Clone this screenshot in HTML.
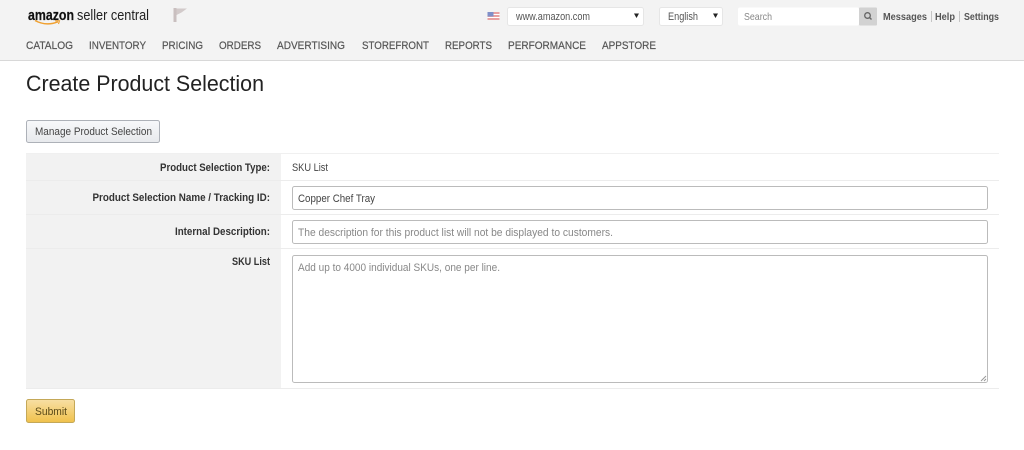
<!DOCTYPE html>
<html><head><meta charset="utf-8"><style>
html,body{margin:0;padding:0;background:#fff;width:1024px;height:450px;overflow:hidden}
svg{display:block;filter:blur(.3px)}
text{font-family:"Liberation Sans",sans-serif;font-size:11px;fill:#333;white-space:pre}
.nav{fill:#555;font-size:11px;stroke:#555;stroke-width:.2px}
.top{fill:#555;font-size:11px}
.lnk{fill:#555;font-size:10px;font-weight:bold}
.lab{fill:#333;font-size:11px;font-weight:bold}
.val{fill:#444;font-size:11px}
.ph{fill:#888;font-size:11px}
</style></head><body>
<svg width="1024" height="450" viewBox="0 0 1024 450" xmlns="http://www.w3.org/2000/svg">
<defs>
<linearGradient id="b" x1="0" y1="0" x2="0" y2="1"><stop offset="0" stop-color="#f7f8fa"/><stop offset="1" stop-color="#e7e9ec"/></linearGradient>
<linearGradient id="y" x1="0" y1="0" x2="0" y2="1"><stop offset="0" stop-color="#f7dfa5"/><stop offset="1" stop-color="#f0c14b"/></linearGradient>
</defs>
<rect width="1024" height="450" fill="#fff"/>
<rect width="1024" height="60" fill="#f3f3f3"/>
<rect y="60" width="1024" height="1" fill="#d8d8d8"/>

<text x="28" y="20" textLength="46" lengthAdjust="spacingAndGlyphs" style="font-size:15px;font-weight:bold;fill:#111;stroke:#111;stroke-width:.2px">amazon</text>
<text x="77" y="20" textLength="72" lengthAdjust="spacingAndGlyphs" style="font-size:15px;fill:#222">seller central</text>
<path d="M35 20.500Q46 26.500 58 21.800" fill="none" stroke="#f0a030" stroke-width="1.500"/>
<path d="M55 20.800L59.500 20.800L58.500 24" fill="none" stroke="#f0a030" stroke-width="1.100"/>
<rect x="173.500" y="8" width="3" height="14" fill="#c9bfbf"/>
<path d="M176.500 8.500H187L181.500 12.500L176.500 15Z" fill="#d2caca"/>

<rect x="487.500" y="12" width="12" height="8" fill="#e8a0a0"/>
<rect x="487.500" y="12" width="6" height="4.500" fill="#7f8fc8"/>
<rect x="493.500" y="14" width="6" height="1" fill="#fff"/><rect x="487.500" y="17" width="12" height="1" fill="#fff"/>

<rect x="507.500" y="7.500" width="136" height="18" rx="2" fill="#fff" stroke="#e6e6e6"/>
<text class="top" x="516" y="20" textLength="74" lengthAdjust="spacingAndGlyphs">www.amazon.com</text>
<path d="M634 13.500H639L636.500 18Z" fill="#222"/>
<rect x="659.500" y="7.500" width="63" height="18" rx="2" fill="#fff" stroke="#e6e6e6"/>
<text class="top" x="668" y="20" textLength="30" lengthAdjust="spacingAndGlyphs">English</text>
<path d="M713 13.500H718L715.500 18Z" fill="#222"/>
<rect x="738" y="7.500" width="121" height="18" rx="2" fill="#fff"/>
<text x="744" y="20" textLength="28" lengthAdjust="spacingAndGlyphs" style="font-size:10.5px;fill:#888">Search</text>
<rect x="859" y="7.500" width="18" height="18" rx="1" fill="#d2d2d2"/>
<circle cx="867.500" cy="15.500" r="2.800" fill="none" stroke="#666" stroke-width="1.300"/>
<path d="M869.500 17.500L871.500 19.500" stroke="#666" stroke-width="1.400"/>
<text class="lnk" x="883" y="20" textLength="44" lengthAdjust="spacingAndGlyphs">Messages</text>
<rect x="931" y="11" width="1" height="11" fill="#c4c4c4"/>
<text class="lnk" x="935" y="20" textLength="20" lengthAdjust="spacingAndGlyphs">Help</text>
<rect x="959" y="11" width="1" height="11" fill="#c4c4c4"/>
<text class="lnk" x="964" y="20" textLength="35" lengthAdjust="spacingAndGlyphs">Settings</text>

<text class="nav" x="26" y="49" textLength="47" lengthAdjust="spacingAndGlyphs">CATALOG</text>
<text class="nav" x="89" y="49" textLength="57" lengthAdjust="spacingAndGlyphs">INVENTORY</text>
<text class="nav" x="162" y="49" textLength="41" lengthAdjust="spacingAndGlyphs">PRICING</text>
<text class="nav" x="219" y="49" textLength="42" lengthAdjust="spacingAndGlyphs">ORDERS</text>
<text class="nav" x="277" y="49" textLength="68" lengthAdjust="spacingAndGlyphs">ADVERTISING</text>
<text class="nav" x="362" y="49" textLength="67" lengthAdjust="spacingAndGlyphs">STOREFRONT</text>
<text class="nav" x="445" y="49" textLength="47" lengthAdjust="spacingAndGlyphs">REPORTS</text>
<text class="nav" x="508" y="49" textLength="78" lengthAdjust="spacingAndGlyphs">PERFORMANCE</text>
<text class="nav" x="602" y="49" textLength="54" lengthAdjust="spacingAndGlyphs">APPSTORE</text>

<text x="26" y="91" textLength="238" lengthAdjust="spacingAndGlyphs" style="font-size:22px;fill:#222">Create Product Selection</text>

<rect x="26.500" y="120.500" width="133" height="22" rx="2" fill="url(#b)" stroke="#adb1b8"/>
<text x="35" y="135" textLength="117" lengthAdjust="spacingAndGlyphs" style="font-size:11px;fill:#444">Manage Product Selection</text>

<rect x="26" y="153" width="255" height="235" fill="#f2f2f2"/>
<rect x="26" y="153" width="973" height="1" fill="#f0f0f0"/>
<rect x="26" y="180" width="973" height="1" fill="#ececec"/>
<rect x="26" y="214" width="973" height="1" fill="#ececec"/>
<rect x="26" y="248" width="973" height="1" fill="#ececec"/>
<rect x="26" y="388" width="973" height="1" fill="#ececec"/>

<text class="lab" x="160" y="171" textLength="110" lengthAdjust="spacingAndGlyphs">Product Selection Type:</text>
<text class="lab" x="92.500" y="201" textLength="177.500" lengthAdjust="spacingAndGlyphs">Product Selection Name / Tracking ID:</text>
<text class="lab" x="175" y="235" textLength="95" lengthAdjust="spacingAndGlyphs">Internal Description:</text>
<text class="lab" x="232" y="265" textLength="38" lengthAdjust="spacingAndGlyphs">SKU List</text>

<text class="val" x="292" y="171" textLength="36" lengthAdjust="spacingAndGlyphs">SKU List</text>

<rect x="292.500" y="186.500" width="695" height="23" rx="2" fill="#fff" stroke="#bbb"/>
<text class="val" x="298" y="202" textLength="77" lengthAdjust="spacingAndGlyphs">Copper Chef Tray</text>
<rect x="292.500" y="220.500" width="695" height="23" rx="2" fill="#fff" stroke="#bbb"/>
<text class="ph" x="298" y="236" textLength="315" lengthAdjust="spacingAndGlyphs">The description for this product list will not be displayed to customers.</text>
<rect x="292.500" y="255.500" width="695" height="127" rx="2" fill="#fff" stroke="#bbb"/>
<text class="ph" x="298" y="271" textLength="202" lengthAdjust="spacingAndGlyphs">Add up to 4000 individual SKUs, one per line.</text>
<path d="M981 381L986 376M984 381L986 379" stroke="#999" stroke-width="1" fill="none"/>

<rect x="26.500" y="399.500" width="48" height="23" rx="2" fill="url(#y)" stroke="#c4a858"/>
<text x="35" y="415" textLength="32" lengthAdjust="spacingAndGlyphs" style="font-size:11px;fill:#5a4a18">Submit</text>
</svg>
</body></html>
